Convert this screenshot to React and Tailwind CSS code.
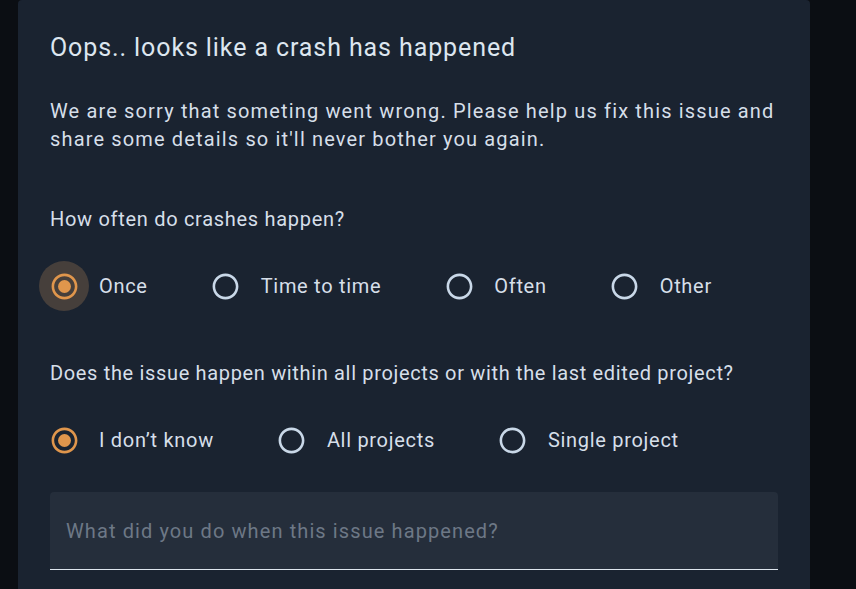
const RADIO_OFF =
  'M12 2C6.48 2 2 6.48 2 12s4.48 10 10 10 10-4.48 10-10S17.52 2 12 2zm0 18c-4.42 0-8-3.58-8-8s3.58-8 8-8 8 3.58 8 8-3.58 8-8 8z'

function Radio({ label, checked, focused }) {
  return (
    <label className="mr-[53px] flex items-center">
      <span
        className={`flex h-[50px] w-[50px] items-center justify-center rounded-full ${
          focused ? 'bg-[#463f3b]' : ''
        }`}
      >
        <svg
          viewBox="0 0 24 24"
          className={`h-[31px] w-[31px] ${checked ? 'text-[#e0964c]' : 'text-[#c9d8e8]'}`}
          fill="currentColor"
        >
          <path d={RADIO_OFF} />
          {checked && <circle cx="12" cy="12" r="5" />}
        </svg>
      </span>
      <span className="ml-[10px] text-[20px] leading-[28px] tracking-[0.7px] text-[#d6dfe9]">
        {label}
      </span>
    </label>
  )
}

export default function App() {
  return (
    <div
      className="h-[589px] w-[856px] overflow-hidden bg-[#0b0e13] pl-[18px]"
      style={{ fontFamily: 'Roboto, "Liberation Sans", sans-serif' }}
    >
      <div className="h-full w-[792px] rounded-t bg-[#1a2330] px-8 pt-[32px]">
        <h1 className="text-[25px] font-normal leading-[32px] tracking-[0.9px] text-[#dde6ef]">
          Oops.. looks like a crash has happened
        </h1>
        <p className="mt-[33px] text-[20px] leading-[28px] tracking-[1.15px] text-[#d6dfe9]">
          We are sorry that someting went wrong. Please help us fix this issue and share some
          details so it'll never bother you again.
        </p>

        <p className="mt-[52px] text-[20px] leading-[28px] tracking-[0.7px] text-[#d6dfe9]">
          How often do crashes happen?
        </p>
        <div className="-ml-[11px] mt-[28px] flex">
          <Radio label="Once" checked focused />
          <Radio label="Time to time" />
          <Radio label="Often" />
          <Radio label="Other" />
        </div>

        <p className="mt-[48px] text-[20px] leading-[28px] tracking-[0.66px] text-[#d6dfe9]">
          Does the issue happen within all projects or with the last edited project?
        </p>
        <div className="-ml-[11px] mt-[28px] flex">
          <Radio label="I don’t know" checked />
          <Radio label="All projects" />
          <Radio label="Single project" />
        </div>

        <div className="mt-[27px] flex h-[78px] w-[728px] items-center rounded-t border-b border-[#dfe6ee] bg-[#252e3b] px-4">
          <span className="text-[20px] tracking-[1.1px] text-[#6d7886]">
            What did you do when this issue happened?
          </span>
        </div>
      </div>
    </div>
  )
}
